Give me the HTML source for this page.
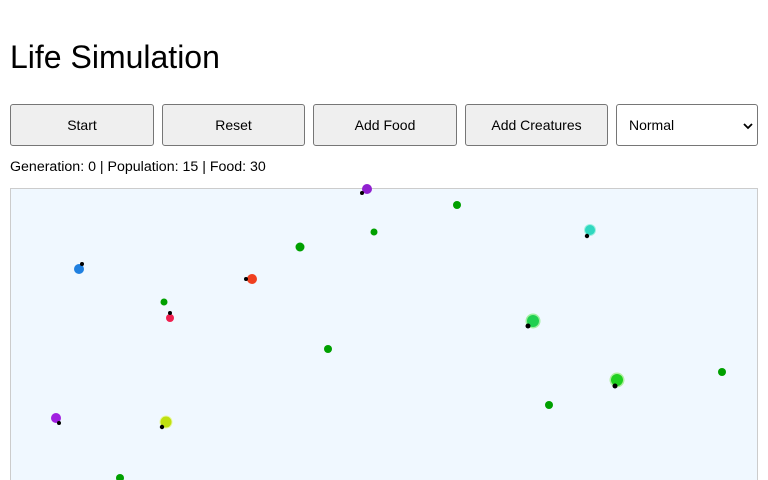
<!DOCTYPE html>
<html style="height:480px;overflow:hidden"><head><style>
body{margin:0;width:768px;height:480px;overflow:hidden;background:#fff;font-family:"Liberation Sans",sans-serif;position:relative}
h1{position:absolute;left:10px;top:39px;margin:0;font-size:32px;font-weight:normal;color:#000}
.b{position:absolute;top:104px;height:42px;box-sizing:border-box;border:1px solid #767676;border-radius:3px;background:#efefef;font-size:14px;display:flex;align-items:center;justify-content:center}
.s{position:absolute;left:616px;top:104px;width:142px;height:42px;box-sizing:border-box;border:1px solid #767676;border-radius:3px;background:#fff;font-size:14px;padding-left:12px;display:flex;align-items:center}
.st{position:absolute;left:10px;top:159px;font-size:14.2px}
.c{position:absolute;left:10px;top:188px;width:748px;height:293px;box-sizing:border-box;border:1px solid #ccc;border-bottom:none;background:#f0f8ff}
</style></head><body>
<h1>Life Simulation</h1>
<div class="b" style="left:10px;width:144px">Start</div>
<div class="b" style="left:162px;width:143px">Reset</div>
<div class="b" style="left:313px;width:144px">Add Food</div>
<div class="b" style="left:465px;width:143px">Add Creatures</div>
<div class="s">Normal<svg style="position:absolute;right:4px;top:17px" width="10" height="8"><path d="M1 2l4 4 4-4" stroke="#000" stroke-width="1.8" fill="none"/></svg></div>
<div class="st">Generation: 0 | Population: 15 | Food: 30</div>
<div class="c"></div>
<svg style="position:absolute;left:0;top:0" width="768" height="480">
<g fill="#00a000">
<circle cx="457" cy="205" r="4"/><circle cx="374" cy="232" r="3.5"/><circle cx="300" cy="247" r="4.5"/>
<circle cx="164" cy="302" r="3.5"/><circle cx="328" cy="349" r="4"/><circle cx="722" cy="372" r="4"/>
<circle cx="549" cy="405" r="4"/><circle cx="120" cy="478" r="4"/>
</g>
<circle cx="367" cy="189" r="5" fill="#9020d0"/><circle cx="362" cy="193" r="2" fill="#000"/>
<circle cx="590" cy="230" r="6" fill="#a0f0e0"/><circle cx="590" cy="230" r="5" fill="#30d8c0"/><circle cx="587" cy="236" r="2.2" fill="#000"/>
<circle cx="79" cy="269" r="5" fill="#2080e0"/><circle cx="82" cy="264" r="2" fill="#000"/>
<circle cx="252" cy="279" r="5" fill="#f04020"/><circle cx="246" cy="279" r="2" fill="#000"/>
<circle cx="170" cy="318" r="4" fill="#f02050"/><circle cx="170" cy="313" r="2" fill="#000"/>
<circle cx="533" cy="321" r="7.5" fill="#a0f0a0"/><circle cx="533" cy="321" r="6" fill="#20d050"/><circle cx="528" cy="326" r="2.5" fill="#000"/>
<circle cx="617" cy="380" r="7.5" fill="#b0f0a0"/><circle cx="617" cy="380" r="6" fill="#20d020"/><circle cx="615" cy="386" r="2.5" fill="#000"/>
<circle cx="56" cy="418" r="5" fill="#a020e0"/><circle cx="59" cy="423" r="2" fill="#000"/>
<circle cx="166" cy="422" r="6.5" fill="#e8f8a0"/><circle cx="166" cy="422" r="5.5" fill="#c0e010"/><circle cx="162" cy="427" r="2.2" fill="#000"/>
</svg>
</body></html>
